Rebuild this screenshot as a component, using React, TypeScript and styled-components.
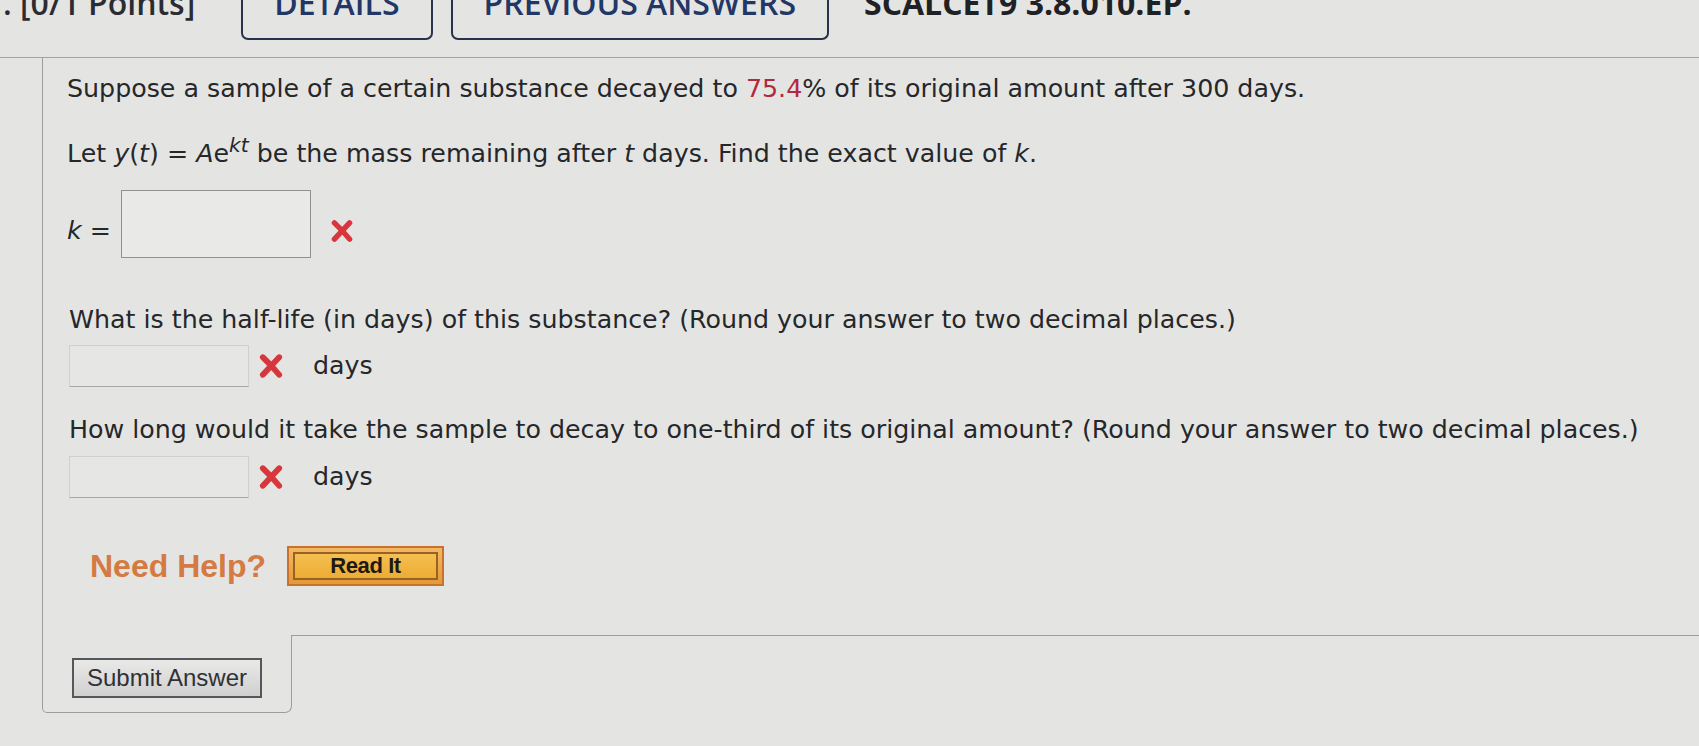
import React from "react";
import styled, { createGlobalStyle } from "styled-components";

const GlobalStyle = createGlobalStyle`
  html, body {
    margin: 0;
    padding: 0;
    background: #e4e5e3;
  }
  body {
    width: 1699px;
    height: 746px;
    overflow: hidden;
  }
`;

const Page = styled.div`
  width: 1699px;
  height: 746px;
  overflow: hidden;
  background: #e4e5e3;
  color: #26272a;
  font-family: "DejaVu Sans", Verdana, sans-serif;
`;

const TopBar = styled.div`
  height: 58px;
  box-sizing: border-box;
  display: flex;
  align-items: flex-start;
  padding-left: 3px;
  border-bottom: 1px solid #a2a4a3;
  font-family: "Open Sans", "Liberation Sans", sans-serif;
  font-weight: 600;
  font-size: 32px;
  line-height: 36px;
`;

const PointsLabel = styled.div`
  margin-top: -15px;
  color: #2b2c33;
  white-space: nowrap;
`;

const Tab = styled.div<{ $gap: number }>`
  margin-top: -15px;
  margin-left: ${({ $gap }) => $gap}px;
  padding: 0 31px 17px;
  border: 2px solid #29324d;
  border-top: none;
  border-radius: 0 0 7px 7px;
  color: #223766;
  white-space: nowrap;
`;

const AssignmentCode = styled.div`
  margin-top: -15px;
  margin-left: 35px;
  color: #202125;
  font-weight: 700;
  white-space: nowrap;
`;

const Panel = styled.div`
  margin-left: 42px;
  display: flex;
  flex-direction: column;
`;

const QuestionBody = styled.div`
  border-left: 1px solid #9c9e9d;
  padding: 16px 0 49px 24px;
`;

const Para = styled.p<{ $mt?: number; $indent?: number }>`
  margin: ${({ $mt }) => $mt ?? 0}px 0 0 ${({ $indent }) => $indent ?? 0}px;
  font-size: 25.3px;
  line-height: 30px;
  white-space: nowrap;
`;

const Var = styled.span`
  font-style: italic;
`;

const Sup = styled.sup`
  font-size: 0.8em;
  font-style: italic;
  line-height: 0;
  vertical-align: 0.5em;
`;

const Given = styled.span`
  color: #b2283e;
`;

const AnswerRow = styled.div<{ $mt: number; $indent?: number }>`
  display: flex;
  align-items: center;
  margin-top: ${({ $mt }) => $mt}px;
  margin-left: ${({ $indent }) => $indent ?? 0}px;
  font-size: 25.3px;
  line-height: 30px;
`;

const RowLabel = styled.span<{ $drop?: number }>`
  margin-top: ${({ $drop }) => $drop ?? 0}px;
  margin-right: 10px;
  white-space: nowrap;
`;

const AnswerBox = styled.div<{ $muted?: boolean }>`
  box-sizing: border-box;
  flex: none;
  width: ${({ $muted }) => ($muted ? 180 : 190)}px;
  height: ${({ $muted }) => ($muted ? 42 : 68)}px;
  background: ${({ $muted }) => ($muted ? "#e6e7e5" : "#e9eae8")};
  border: 1px solid ${({ $muted }) => ($muted ? "#d0d1cf" : "#8f9190")};
  border-bottom-color: ${({ $muted }) => ($muted ? "#a7a8a7" : "#8f9190")};
`;

const CrossMark = styled.svg<{ $gap: number; $drop?: number }>`
  flex: none;
  margin-left: ${({ $gap }) => $gap}px;
  margin-top: ${({ $drop }) => $drop ?? 0}px;
`;

const Unit = styled.span`
  margin-left: 28px;
`;

const HelpRow = styled.div`
  display: flex;
  align-items: center;
  margin-top: 48px;
  padding-left: 23px;
`;

const NeedHelp = styled.span`
  font-family: "Liberation Sans", Arial, sans-serif;
  font-weight: 700;
  font-size: 32px;
  line-height: 36px;
  color: #d47a42;
`;

const ReadItButton = styled.button`
  box-sizing: border-box;
  margin-left: 21px;
  width: 157px;
  height: 40px;
  padding: 4px;
  border: 2px solid #c9722c;
  background: linear-gradient(#f2b864, #e39a37);
  cursor: pointer;
`;

const ReadItFace = styled.span`
  box-sizing: border-box;
  display: flex;
  align-items: center;
  justify-content: center;
  height: 100%;
  border: 2px solid #9a6222;
  background: linear-gradient(#f4bf52, #eeac33);
  color: #1d1a16;
  font-family: "Liberation Sans", Arial, sans-serif;
  font-weight: 700;
  font-size: 22px;
  letter-spacing: -0.4px;
`;

const Footer = styled.div`
  display: flex;
`;

const SubmitCell = styled.div`
  box-sizing: border-box;
  width: 250px;
  height: 78px;
  padding: 23px 0 0 29px;
  border: 1px solid #9c9e9d;
  border-top: none;
  border-radius: 0 0 7px 5px;
`;

const SubmitButton = styled.button`
  box-sizing: border-box;
  width: 190px;
  height: 40px;
  padding: 0;
  border: 2px solid #55575a;
  background: linear-gradient(#e9e9e8, #cfd0cf);
  color: #303134;
  font-family: "Liberation Sans", Arial, sans-serif;
  font-size: 24px;
  cursor: pointer;
`;

const FooterRest = styled.div`
  flex: 1;
  border-top: 1px solid #9c9e9d;
`;

const Cross = ({ size, gap, drop }: { size: number; gap: number; drop?: number }) => (
  <CrossMark
    $gap={gap}
    $drop={drop}
    width={size}
    height={size}
    viewBox="0 0 24 24"
    aria-label="incorrect"
  >
    <path
      d="M5 4.5 Q12 11 19 19.5 M19 4.5 Q12 12 5 19.5"
      fill="none"
      stroke="#d8363d"
      strokeWidth={5}
      strokeLinecap="round"
    />
  </CrossMark>
);

export default function App() {
  return (
    <Page>
      <GlobalStyle />
      <TopBar>
        <PointsLabel>. [0/1 Points]</PointsLabel>
        <Tab $gap={46}>DETAILS</Tab>
        <Tab $gap={18}>PREVIOUS ANSWERS</Tab>
        <AssignmentCode>SCALCET9 3.8.010.EP.</AssignmentCode>
      </TopBar>

      <Panel>
        <QuestionBody>
          <Para>
            Suppose a sample of a certain substance decayed to <Given>75.4</Given>% of its
            original amount after 300 days.
          </Para>
          <Para $mt={35}>
            Let <Var>y</Var>(<Var>t</Var>) = <Var>A</Var>e<Sup>kt</Sup> be the mass remaining
            after <Var>t</Var> days. Find the exact value of <Var>k</Var>.
          </Para>

          <AnswerRow $mt={21}>
            <RowLabel $drop={14}>
              <Var>k</Var> =
            </RowLabel>
            <AnswerBox />
            <Cross size={26} gap={18} drop={14} />
          </AnswerRow>

          <Para $mt={47} $indent={2}>
            What is the half-life (in days) of this substance? (Round your answer to two decimal
            places.)
          </Para>
          <AnswerRow $mt={10} $indent={2}>
            <AnswerBox $muted />
            <Cross size={28} gap={8} />
            <Unit>days</Unit>
          </AnswerRow>

          <Para $mt={28} $indent={2}>
            How long would it take the sample to decay to one-third of its original amount? (Round
            your answer to two decimal places.)
          </Para>
          <AnswerRow $mt={11} $indent={2}>
            <AnswerBox $muted />
            <Cross size={28} gap={8} />
            <Unit>days</Unit>
          </AnswerRow>

          <HelpRow>
            <NeedHelp>Need Help?</NeedHelp>
            <ReadItButton>
              <ReadItFace>Read It</ReadItFace>
            </ReadItButton>
          </HelpRow>
        </QuestionBody>

        <Footer>
          <SubmitCell>
            <SubmitButton>Submit Answer</SubmitButton>
          </SubmitCell>
          <FooterRest />
        </Footer>
      </Panel>
    </Page>
  );
}
